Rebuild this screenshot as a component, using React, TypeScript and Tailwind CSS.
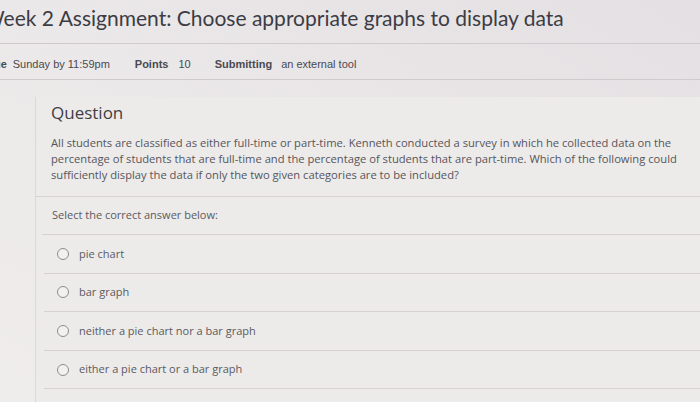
import React from "react";

const options = [
  "pie chart",
  "bar graph",
  "neither a pie chart nor a bar graph",
  "either a pie chart or a bar graph",
];

export default function App() {
  return (
    <div className="w-[700px] h-[402px] overflow-hidden bg-gradient-to-bl from-[#e4e0e3] via-[#ebe8e9] to-[#efedeb] text-[#3f3f46]">
      <div className="h-[44px] border-b border-[#cfcacd] flex items-end pb-[15px] -ml-[17px]">
        <h1 className="text-[21px] leading-none text-[#3c3c44] whitespace-nowrap" style={{ fontFamily: "Lato, sans-serif" }}>
          Week 2 Assignment: Choose appropriate graphs to display data
        </h1>
      </div>
      <div
        className="h-[36px] border-b border-[#cfcacd] flex items-center text-[11px] text-[#4a4a50] -ml-[14px] pt-[6px]"
        style={{ fontFamily: "'Liberation Sans', Arial, sans-serif" }}
      >
        <span className="font-bold">Due</span>
        <span className="ml-[6px]">Sunday by 11:59pm</span>
        <span className="font-bold ml-[25px]">Points</span>
        <span className="ml-[10px]">10</span>
        <span className="font-bold ml-[24px]">Submitting</span>
        <span className="ml-[9px]">an external tool</span>
      </div>
      <div className="ml-[35px] mt-[17px] border-l border-[#dcd8d8] bg-[#edebea] pb-[20px]" style={{ fontFamily: "'Open Sans', sans-serif" }}>
        <div className="pl-[15px] pr-[20px] pt-[5px] pb-[13px] border-b border-[#d6d2d2]">
          <div className="text-[17px] leading-[22px] text-[#3e3e44]">Question</div>
          <p className="mt-[11px] text-[11.2px] leading-[16px] text-[#55555c]">
            All students are classified as either full-time or part-time. Kenneth conducted a survey in which he collected data on the percentage of students that are full-time and the percentage of students that are part-time. Which of the following could sufficiently display the data if only the two given categories are to be included?
          </p>
        </div>
        <div className="ml-[6px] pl-[10px] h-[38px] flex items-center border-b border-[#d6d2d2] text-[11px] text-[#5a5a60]">
          Select the correct answer below:
        </div>
        {options.map((o) => (
          <div key={o} className="ml-[8px] h-[38.6px] flex items-center border-b border-[#d6d2d2] text-[11px] text-[#5a5a60]">
            <span className="ml-[13px] w-[12px] h-[12px] rounded-full border border-[#8f8b8c] bg-[#f3f1f0]" />
            <span className="ml-[10px]">{o}</span>
          </div>
        ))}
      </div>
    </div>
  );
}
